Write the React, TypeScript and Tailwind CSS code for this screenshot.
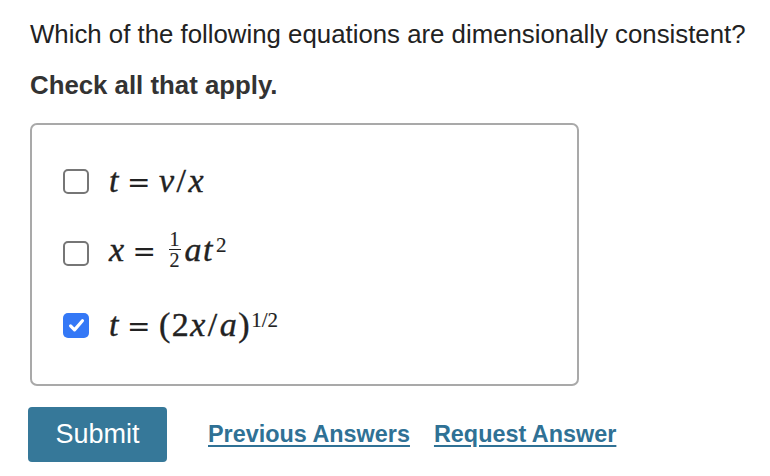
import { useState } from 'react';

function Frac({ n, d }: { n: string; d: string }) {
  return (
    <span className="inline-flex flex-col items-center align-middle mx-[4px] not-italic text-[20px] leading-[19px] relative top-[-3px] tracking-normal [-webkit-text-stroke:0.15px_#222]">
      <span>{n}</span>
      <span className="border-t-[1.5px] border-[#222] px-[1px] pt-[1px]">{d}</span>
    </span>
  );
}

function Box({ checked, onClick }: { checked: boolean; onClick: () => void }) {
  return (
    <button
      onClick={onClick}
      className={`w-[26px] h-[25px] shrink-0 rounded-[5px] flex items-center justify-center ${
        checked ? 'bg-[#3478f6]' : 'border-2 border-[#767676] bg-white'
      }`}
    >
      {checked && (
        <svg viewBox="0 0 24 24" className="w-[19px] h-[19px]" fill="none" stroke="white" strokeWidth={4} strokeLinecap="round" strokeLinejoin="round">
          <path d="M4.5 12.5l5 5L19.5 6" />
        </svg>
      )}
    </button>
  );
}

const math =
  'font-["Liberation_Serif",serif] text-[34px] text-[#222] leading-none whitespace-nowrap tracking-[1.5px] [-webkit-text-stroke:0.4px_#222]';

const sup = 'text-[21px] relative top-[-9px] tracking-normal [-webkit-text-stroke:0.15px_#222]';

function Eq() {
  return <span className="mx-[7px] font-['DejaVu_Serif',serif] text-[28px] [-webkit-text-stroke:0]">=</span>;
}

export default function App() {
  const [checks, setChecks] = useState([false, false, true]);
  const toggle = (i: number) => setChecks(checks.map((c, j) => (j === i ? !c : c)));

  const options = [
    <span className={math}>
      <i>t</i>
      <Eq />
      <i>v</i>
      <span className="mx-[1px]">/</span>
      <i>x</i>
    </span>,
    <span className={math}>
      <i>x</i>
      <Eq />
      <Frac n="1" d="2" />
      <i>at</i>
      <sup className={`${sup} ml-[2px]`}>2</sup>
    </span>,
    <span className={math}>
      <i>t</i>
      <Eq />
      (2<i>x</i>
      <span className="mx-[1px]">/</span>
      <i>a</i>)
      <sup className={`${sup} ml-[0px]`}>1/2</sup>
    </span>,
  ];

  return (
    <div className="bg-white min-h-[476px] pl-[30px] pt-[18px] font-['Liberation_Sans',Arial,sans-serif] text-[#222]">
      <p className="text-[25.8px] leading-[33px]">Which of the following equations are dimensionally consistent?</p>
      <p className="text-[25.8px] leading-[33px] font-bold mt-[18px] text-[#333]">Check all that apply.</p>

      <div className="mt-[21px] w-[549px] h-[263px] border-2 border-[#a9a9a9] rounded-[7px] pl-[31px] pt-[42px] flex flex-col gap-[44px]">
        {options.map((opt, i) => (
          <div key={i} className="flex items-center gap-[20px] h-[28px]">
            <Box checked={checks[i]} onClick={() => toggle(i)} />
            {opt}
          </div>
        ))}
      </div>

      <div className="flex items-center mt-[21px] ml-[-2px]">
        <button className="w-[139px] h-[55px] rounded-[4px] bg-[#367899] text-white text-[27px]">Submit</button>
        <a href="#" className="ml-[41px] text-[23.4px] font-bold text-[#2f7195] underline underline-offset-[3px]">
          Previous Answers
        </a>
        <a href="#" className="ml-[24px] text-[23.4px] font-bold text-[#2f7195] underline underline-offset-[3px]">
          Request Answer
        </a>
      </div>
    </div>
  );
}
